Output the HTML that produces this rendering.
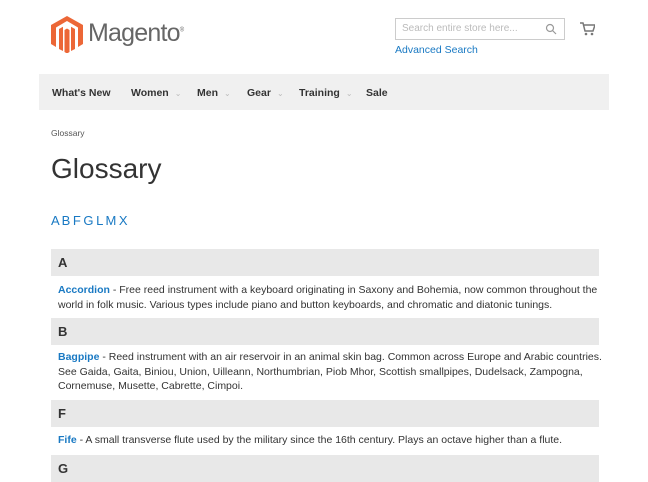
<!DOCTYPE html>
<html><head><meta charset="utf-8"><style>
body{margin:0;width:648px;height:477px;overflow:hidden;background:#fff;font-family:"Liberation Sans",sans-serif;color:#333;position:relative}
.a{position:absolute}
.nav{left:39px;top:74px;width:570px;height:36px;background:#f0f0f0;font-size:10.5px;font-weight:bold;color:#333}
.nav span{position:absolute;top:13px}
.nav i{font-style:normal;color:#bbb;font-weight:normal;font-size:8px;margin-left:6px}
.bar{left:51px;width:548px;height:27px;background:#e8e8e8;font-weight:bold;font-size:13px;line-height:27px;text-indent:7px;color:#333}
.p{left:58px;width:545px;font-size:10.5px;line-height:14.5px;color:#333;white-space:nowrap}
.p b{color:#1979c3}
</style></head><body>
<svg class="a" style="left:51px;top:16px" width="32" height="37" viewBox="0 0 32 37"><path d="M16 0L32 9v19l-5 3V11.5L16 5 5 11.5V31l-5-3V9z M13.5 14l2.5-1.5 2.5 1.5v22l-2.5 1.5-2.5-1.5z M8 13l4-2.3V35L8 33z M24 13l-4-2.3V35l4-2z" fill="#ec6737"/></svg>
<div class="a" style="left:88px;top:19px;font-size:25px;color:#666;letter-spacing:-0.8px">Magento<sup style="font-size:6px">®</sup></div>
<div class="a" style="left:395px;top:18px;width:170px;height:22px;border:1px solid #ccc;box-sizing:border-box;font-size:10px;color:#bbb;line-height:20px;text-indent:6px">Search entire store here...</div>
<svg class="a" style="left:545px;top:23px" width="12" height="12"><circle cx="5" cy="5" r="3.5" fill="none" stroke="#999" stroke-width="1.2"/><path d="M7.5 7.5L11 11" stroke="#999" stroke-width="1.2"/></svg>
<svg class="a" style="left:580px;top:22px" width="15" height="14"><path d="M0 1h3l2 8h8l2-6H4" fill="none" stroke="#777" stroke-width="1.5"/><circle cx="6" cy="12" r="1.3" fill="#777"/><circle cx="12" cy="12" r="1.3" fill="#777"/></svg>
<div class="a" style="left:395px;top:44px;font-size:10.5px;color:#1979c3">Advanced Search</div>
<div class="a nav"><span style="left:13px">What's New</span><span style="left:92px">Women<i>⌄</i></span><span style="left:158px">Men<i>⌄</i></span><span style="left:208px">Gear<i>⌄</i></span><span style="left:260px">Training<i>⌄</i></span><span style="left:327px">Sale</span></div>
<div class="a" style="left:51px;top:128px;font-size:8.5px;color:#555">Glossary</div>
<div class="a" style="left:51px;top:153px;font-size:28px;color:#333">Glossary</div>
<div class="a" style="left:51px;top:213px;font-size:13px;color:#1979c3;word-spacing:-1px">A B F G L M X</div>
<div class="a bar" style="top:249px">A</div>
<div class="a p" style="top:283px"><b>Accordion</b> - Free reed instrument with a keyboard originating in Saxony and Bohemia, now common throughout the<br>world in folk music. Various types include piano and button keyboards, and chromatic and diatonic tunings.</div>
<div class="a bar" style="top:318px">B</div>
<div class="a p" style="top:350px"><b>Bagpipe</b> - Reed instrument with an air reservoir in an animal skin bag. Common across Europe and Arabic countries.<br>See Gaida, Gaita, Biniou, Union, Uilleann, Northumbrian, Piob Mhor, Scottish smallpipes, Dudelsack, Zampogna,<br>Cornemuse, Musette, Cabrette, Cimpoi.</div>
<div class="a bar" style="top:400px">F</div>
<div class="a p" style="top:433px"><b>Fife</b> - A small transverse flute used by the military since the 16th century. Plays an octave higher than a flute.</div>
<div class="a bar" style="top:455px">G</div>
</body></html>
